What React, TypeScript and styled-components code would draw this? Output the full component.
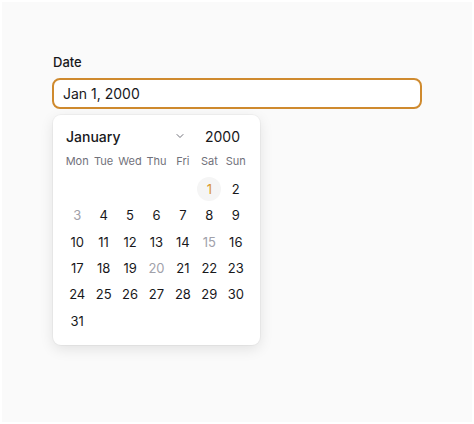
import { createGlobalStyle, styled } from 'styled-components';

const GlobalStyle = createGlobalStyle`
  html, body {
    margin: 0;
    padding: 0;
    background: #ffffff;
  }
  body {
    font-family: Inter, "Noto Sans", sans-serif;
    color: #18181b;
  }
`;

const weekdays = ['Mon', 'Tue', 'Wed', 'Thu', 'Fri', 'Sat', 'Sun'];
const disabledDays = [3, 15, 20];
const selectedDay = 1;
const firstOffset = 5; // Jan 1, 2000 is a Saturday

export default function App(): JSX.Element {
  const cells: (number | null)[] = [
    ...Array.from({ length: firstOffset }, () => null),
    ...Array.from({ length: 31 }, (_, i) => i + 1),
  ];

  return (
    <>
      <GlobalStyle />
      <Page>
        <Field>
          <Label htmlFor={'date'}>Date</Label>
          <Input id={'date'}>Jan 1, 2000</Input>
          <Popover>
            <Header>
              <MonthSelect>
                <span>January</span>
                <Chevron viewBox="0 0 24 24">
                  <path d="M6 9l6 6 6-6" />
                </Chevron>
              </MonthSelect>
              <Year>2000</Year>
            </Header>
            <Grid>
              {weekdays.map((day) => (
                <Weekday key={day}>{day}</Weekday>
              ))}
            </Grid>
            <DaysGrid>
              {cells.map((day, index) =>
                day === null ? (
                  <span key={`empty-${index}`} />
                ) : (
                  <Day
                    key={day}
                    $selected={day === selectedDay}
                    $disabled={disabledDays.includes(day)}
                  >
                    {day}
                  </Day>
                ),
              )}
            </DaysGrid>
          </Popover>
        </Field>
      </Page>
    </>
  );
}

const Page = styled.div`
  box-sizing: border-box;
  margin: 2px;
  height: 420px;
  background: #fafafa;
  padding: 51px 50px 0 50px;
`;

const Field = styled.div`
  position: relative;
  display: flex;
  flex-direction: column;
  width: 370px;
`;

const Label = styled.label`
  font-size: 13px;
  font-weight: 500;
  line-height: 18px;
  margin-bottom: 7px;
  padding-left: 1px;
  color: #18181b;
`;

const Input = styled.div`
  box-sizing: border-box;
  height: 31px;
  display: flex;
  align-items: center;
  padding: 0 9px;
  border: 2px solid #cf8a2e;
  border-radius: 8px;
  background: #ffffff;
  font-size: 14px;
  color: #18181b;
`;

const Popover = styled.div`
  position: absolute;
  top: 62px;
  left: 1px;
  box-sizing: border-box;
  width: 207px;
  padding: 7px 11px 11px 11px;
  background: #ffffff;
  border-radius: 8px;
  box-shadow: 0 4px 14px rgba(0, 0, 0, 0.1), 0 0 0 1px rgba(0, 0, 0, 0.03);
`;

const Header = styled.div`
  display: flex;
  align-items: center;
  height: 28px;
`;

const MonthSelect = styled.div`
  flex: 1;
  display: flex;
  align-items: center;
  justify-content: space-between;
  padding: 0 10px 0 2px;
  font-size: 14px;
  font-weight: 500;
`;

const Chevron = styled.svg`
  width: 12px;
  height: 12px;
  fill: none;
  stroke: #71717a;
  stroke-width: 2;
  stroke-linecap: round;
  stroke-linejoin: round;
`;

const Year = styled.div`
  width: 53px;
  text-align: center;
  font-size: 14px;
  font-weight: 400;
`;

const Grid = styled.div`
  display: grid;
  grid-template-columns: repeat(7, 1fr);
  height: 22px;
  align-items: center;
  margin-bottom: 4px;
`;

const Weekday = styled.span`
  text-align: center;
  font-size: 11px;
  color: #71717a;
`;

const DaysGrid = styled.div`
  display: grid;
  grid-template-columns: repeat(7, 1fr);
  grid-auto-rows: 26.3px;
`;

const Day = styled.span<{ $selected?: boolean; $disabled?: boolean }>`
  justify-self: center;
  align-self: center;
  width: 24px;
  height: 24px;
  display: flex;
  align-items: center;
  justify-content: center;
  border-radius: 50%;
  font-size: 13px;
  color: ${({ $selected, $disabled }) =>
    $selected ? '#d9952f' : $disabled ? '#a1a1aa' : '#18181b'};
  background: ${({ $selected }) => ($selected ? '#f5f5f5' : 'transparent')};
`;
